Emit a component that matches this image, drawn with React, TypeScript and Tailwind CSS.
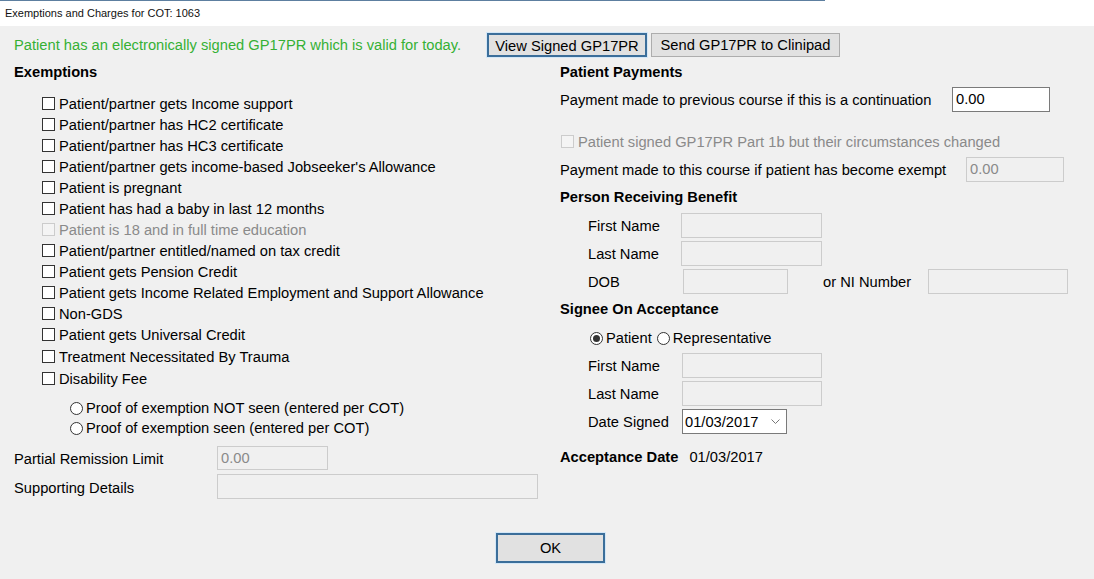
import React from "react"

const exemptions: { label: string; disabled?: boolean; extra?: boolean }[] = [
  { label: "Patient/partner gets Income support" },
  { label: "Patient/partner has HC2 certificate" },
  { label: "Patient/partner has HC3 certificate" },
  { label: "Patient/partner gets income-based Jobseeker's Allowance" },
  { label: "Patient is pregnant" },
  { label: "Patient has had a baby in last 12 months" },
  { label: "Patient is 18 and in full time education", disabled: true },
  { label: "Patient/partner entitled/named on tax credit" },
  { label: "Patient gets Pension Credit" },
  { label: "Patient gets Income Related Employment and Support Allowance" },
  { label: "Non-GDS" },
  { label: "Patient gets Universal Credit" },
  { label: "Treatment Necessitated By Trauma", extra: true },
  { label: "Disability Fee", extra: true },
]

function Check({ label, disabled }: { label: string; disabled?: boolean }) {
  return (
    <div className="flex items-center h-[21px]">
      <span
        className={`w-[13px] h-[13px] shrink-0 border ${
          disabled ? "border-[#cccccc] bg-[#f4f4f4]" : "border-[#333333] bg-white"
        }`}
      />
      <span className={`ml-[4px] pt-px whitespace-nowrap ${disabled ? "text-[#8a8a8a]" : ""}`}>{label}</span>
    </div>
  )
}

function Radio({ label, checked }: { label: string; checked?: boolean }) {
  return (
    <span className="flex items-center">
      <span className="w-[13px] h-[13px] shrink-0 rounded-full border border-[#333333] bg-white flex items-center justify-center">
        {checked && <span className="w-[7px] h-[7px] rounded-full bg-[#333333]" />}
      </span>
      <span className="ml-[3px] pt-px whitespace-nowrap">{label}</span>
    </span>
  )
}

function Box({ w, value, enabled, h = "h-[25px]" }: { w: string; value?: string; enabled?: boolean; h?: string }) {
  return (
    <div
      className={`${w} ${h} shrink-0 border flex items-center pl-[3px] ${
        enabled ? "border-[#7a7a7a] bg-white text-black" : "border-[#cccccc] bg-[#f0f0f0] text-[#8a8a8a]"
      }`}
    >
      {value}
    </div>
  )
}

function Label({ w, children }: { w: string; children: React.ReactNode }) {
  return <span className={`${w} shrink-0 pt-[2px] whitespace-nowrap`}>{children}</span>
}

function Heading({ children }: { children: React.ReactNode }) {
  return <div className="h-[22px] flex items-center font-bold whitespace-nowrap">{children}</div>
}

export default function App() {
  return (
    <div className="w-[1094px] h-[579px] overflow-hidden bg-[#f0f0f0] text-black text-[14.7px] font-['Liberation_Sans',Arial,sans-serif]">
      {/* title bar */}
      <div className="bg-white h-[26px] flex flex-col">
        <div className="h-px w-[825px] bg-[#5d7fa0]" />
        <div className="flex-1 flex items-center pl-[5px] text-[11px] text-[#111]">
          Exemptions and Charges for COT: 1063
        </div>
      </div>

      {/* top row */}
      <div className="flex items-center h-[24px] mt-[7px] pl-[14px]">
        <div className="w-[473px] text-[#35b035] whitespace-nowrap">
          Patient has an electronically signed GP17PR which is valid for today.
        </div>
        <button className="w-[160px] h-[24px] border-2 border-[#3b6e9a] bg-[#e1e1e1] shadow-[0_0_0_1px_#d3e7f7] whitespace-nowrap">
          View Signed GP17PR
        </button>
        <button className="ml-[4px] w-[189px] h-[24px] border border-[#adadad] bg-[#e1e1e1] whitespace-nowrap">
          Send GP17PR to Clinipad
        </button>
      </div>

      <div className="flex mt-[4px] pl-[14px]">
        {/* left column */}
        <div className="w-[546px] shrink-0">
          <Heading>Exemptions</Heading>
          <div className="mt-[10px] pl-[28px]">
            {exemptions.map((e) => (
              <div key={e.label} className={e.extra ? "mt-px" : ""}>
                <Check label={e.label} disabled={e.disabled} />
              </div>
            ))}
          </div>
          <div className="mt-[9px] pl-[56px]">
            <div className="h-[20px] flex items-center">
              <Radio label="Proof of exemption NOT seen (entered per COT)" />
            </div>
            <div className="h-[20px] flex items-center">
              <Radio label="Proof of exemption seen (entered per COT)" />
            </div>
          </div>
          <div className="mt-[8px] flex items-center">
            <Label w="w-[203px]">Partial Remission Limit</Label>
            <Box w="w-[111px]" h="h-[24px]" value="0.00" />
          </div>
          <div className="mt-[4px] flex items-center">
            <Label w="w-[203px]">Supporting Details</Label>
            <Box w="w-[321px]" />
          </div>
        </div>

        {/* right column */}
        <div className="flex-1">
          <Heading>Patient Payments</Heading>
          <div className="mt-[4px] flex items-center">
            <Label w="w-[392px]">Payment made to previous course if this is a continuation</Label>
            <Box w="w-[98px]" value="0.00" enabled />
          </div>
          <div className="mt-[19px] pl-px">
            <Check label="Patient signed GP17PR Part 1b but their circumstances changed" disabled />
          </div>
          <div className="mt-[5px] flex items-center">
            <Label w="w-[406px]">Payment made to this course if patient has become exempt</Label>
            <Box w="w-[98px]" value="0.00" />
          </div>

          <div className="mt-[4px]">
            <Heading>Person Receiving Benefit</Heading>
          </div>
          <div className="pl-[28px]">
            <div className="mt-[5px] flex items-center">
              <Label w="w-[93px]">First Name</Label>
              <Box w="w-[141px]" />
            </div>
            <div className="mt-[3px] flex items-center">
              <Label w="w-[93px]">Last Name</Label>
              <Box w="w-[141px]" />
            </div>
            <div className="mt-[3px] flex items-center">
              <Label w="w-[95px]">DOB</Label>
              <Box w="w-[105px]" />
              <Label w="ml-[35px] w-[105px]">or NI Number</Label>
              <Box w="w-[140px]" />
            </div>
          </div>

          <div className="mt-[4px]">
            <Heading>Signee On Acceptance</Heading>
          </div>
          <div className="pl-[28px]">
            <div className="mt-[8px] h-[20px] flex items-center pl-[2px]">
              <Radio label="Patient" checked />
              <span className="ml-[5px]">
                <Radio label="Representative" />
              </span>
            </div>
            <div className="mt-[5px] flex items-center">
              <Label w="w-[94px]">First Name</Label>
              <Box w="w-[140px]" />
            </div>
            <div className="mt-[3px] flex items-center">
              <Label w="w-[94px]">Last Name</Label>
              <Box w="w-[140px]" />
            </div>
            <div className="mt-[3px] flex items-center">
              <Label w="w-[94px]">Date Signed</Label>
              <div className="w-[105px] h-[25px] border border-[#7a7a7a] bg-white flex items-center pl-[2px] pr-[6px] justify-between">
                <span className="pt-px">01/03/2017</span>
                <svg width="9" height="6" viewBox="0 0 9 6" className="mt-px">
                  <polyline points="0.5,0.5 4.5,4.5 8.5,0.5" fill="none" stroke="#777" strokeWidth="1" />
                </svg>
              </div>
            </div>
          </div>
          <div className="mt-[12px] h-[22px] flex items-center">
            <span className="font-bold">Acceptance Date</span>
            <span className="ml-[11px]">01/03/2017</span>
          </div>
        </div>
      </div>

      <div className="mt-[34px] pl-[496px]">
        <button className="w-[109px] h-[30px] border-2 border-[#3b6e9a] bg-[#e1e1e1] shadow-[0_0_0_1px_#d3e7f7]">
          OK
        </button>
      </div>
    </div>
  )
}
